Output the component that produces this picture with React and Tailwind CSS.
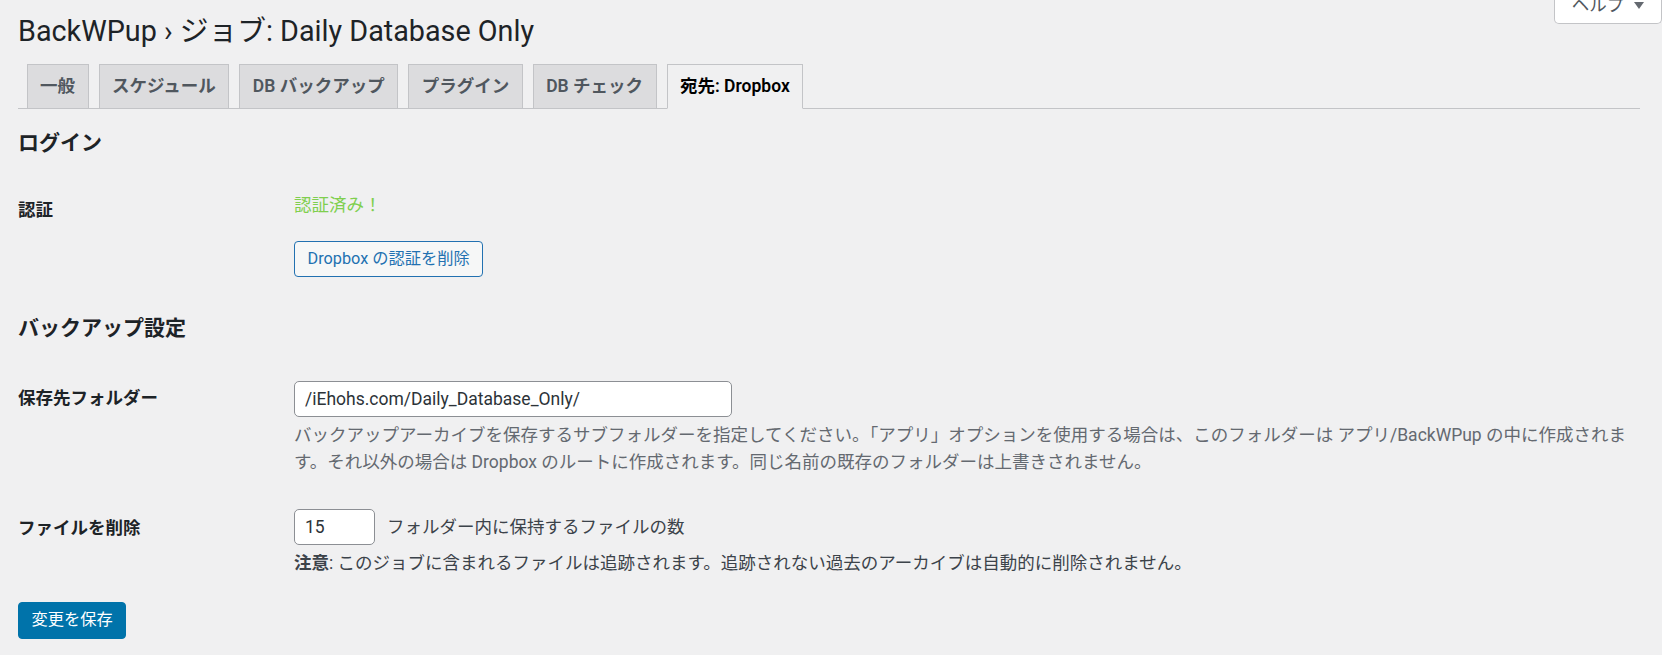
import { useState } from "react"

const tabs = ["一般", "スケジュール", "DB バックアップ", "プラグイン", "DB チェック", "宛先: Dropbox"]

const App = () => {
  const [active, setActive] = useState(5)
  const [folder, setFolder] = useState("/iEhohs.com/Daily_Database_Only/")
  const [maxFiles, setMaxFiles] = useState("15")

  return (
    <div className="relative min-h-screen bg-[#f0f0f1] font-['Roboto','Noto_Sans_CJK_JP',sans-serif] text-[#3c434a]">
      {/* Help tab */}
      <button className="absolute right-0 top-[-13px] flex h-[37px] w-[108px] items-center justify-center gap-[10px] rounded-b-[5px] border border-t-0 border-[#c3c4c7] bg-white text-[17.5px] text-[#50575e]">
        <span>ヘルプ</span>
        <svg width="10" height="7" viewBox="0 0 10 7" className="mt-[1px]">
          <path d="M0 0h10L5 7z" fill="#646970" />
        </svg>
      </button>

      <div className="pl-[18px] pr-[22px]">
        <h1 className="pt-[13px] text-[28.75px] font-normal leading-[37px] text-[#1d2327]">
          BackWPup › ジョブ: Daily Database Only
        </h1>

        {/* Tabs */}
        <div className="mt-[14px] flex border-b border-[#c3c4c7] pl-[8.5px]">
          {tabs.map((t, i) => (
            <button
              key={t}
              onClick={() => setActive(i)}
              className={
                i === active
                  ? "-mb-px mr-[10px] flex h-[45px] items-center border border-[#c3c4c7] border-b-[#f0f0f1] bg-[#f0f0f1] px-[12.5px] text-[17.5px] font-semibold text-black"
                  : "-mb-px mr-[10px] flex h-[45px] items-center border border-[#c3c4c7] bg-[#dcdcde] px-[12.5px] text-[17.5px] font-semibold text-[#50575e]"
              }
            >
              {t}
            </button>
          ))}
        </div>

        {/* ログイン */}
        <h2 className="mt-[21px] text-[21px] font-semibold leading-[27px] text-[#1d2327]">ログイン</h2>
        <div className="mt-[17px] flex">
          <div className="w-[276px] shrink-0 pt-[25px] text-[17.5px] font-semibold leading-[23px] text-[#1d2327]">認証</div>
          <div className="pb-[19px] pt-[19px]">
            <div className="text-[17.5px] leading-[25px] text-[#7fcf4e]">認証済み！</div>
            <button className="mt-[23px] h-[36px] rounded-[4px] border border-[#2271b1] bg-[#f6f7f7] px-[12.5px] text-[16.25px] text-[#2271b1]">
              Dropbox の認証を削除
            </button>
          </div>
        </div>

        {/* バックアップ設定 */}
        <h2 className="mt-[19px] text-[21px] font-semibold leading-[27px] text-[#1d2327]">バックアップ設定</h2>
        <div className="mt-[20px] flex">
          <div className="w-[276px] shrink-0 pt-[25px] text-[17.5px] font-semibold leading-[23px] text-[#1d2327]">保存先フォルダー</div>
          <div className="pb-[16px] pt-[19px]">
            <input
              type="text"
              value={folder}
              onChange={(e) => setFolder(e.target.value)}
              className="h-[36px] w-[438px] rounded-[5px] border border-[#8c8f94] bg-white px-[10px] text-[17.5px] text-[#2c3338] outline-none"
            />
            <p className="mt-[5px] w-[1350px] text-[17.5px] leading-[27px] text-[#646970]">
              バックアップアーカイブを保存するサブフォルダーを指定してください。「アプリ」オプションを使用する場合は、このフォルダーは アプリ/BackWPup の中に作成されます。それ以外の場合は Dropbox のルートに作成されます。同じ名前の既存のフォルダーは上書きされません。
            </p>
          </div>
        </div>

        <div className="flex">
          <div className="w-[276px] shrink-0 pt-[25px] text-[17.5px] font-semibold leading-[23px] text-[#1d2327]">ファイルを削除</div>
          <div className="pb-[19px] pt-[17px]">
            <div className="flex items-center">
              <input
                type="text"
                value={maxFiles}
                onChange={(e) => setMaxFiles(e.target.value)}
                className="h-[36px] w-[81px] rounded-[5px] border border-[#8c8f94] bg-white px-[10px] text-[17.5px] text-[#2c3338] outline-none"
              />
              <span className="ml-[12px] text-[17.5px] leading-[27px]">フォルダー内に保持するファイルの数</span>
            </div>
            <p className="mt-[5px] text-[17.5px] leading-[27px]">
              <strong className="font-semibold">注意</strong>: このジョブに含まれるファイルは追跡されます。追跡されない過去のアーカイブは自動的に削除されません。
            </p>
          </div>
        </div>

        <button className="mt-[6px] h-[37px] rounded-[4px] border border-[#0073aa] bg-[#0073aa] px-[12.5px] text-[16.25px] text-white">
          変更を保存
        </button>
      </div>
    </div>
  )
}

export default App
